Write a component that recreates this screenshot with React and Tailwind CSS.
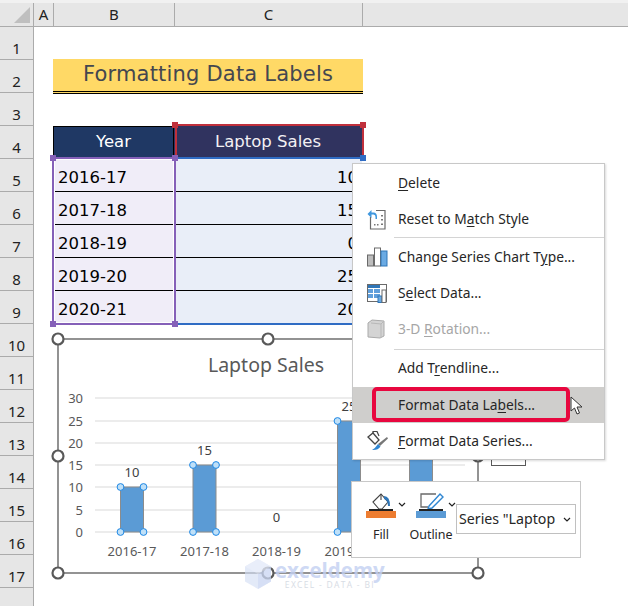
import React from 'react';

const headFont = "font-['DejaVu_Sans',sans-serif]";
const uiFont = "font-['Noto_Sans',sans-serif]";

const rows = [
  { id: 5, year: '2016-17', sales: 10 },
  { id: 6, year: '2017-18', sales: 15 },
  { id: 7, year: '2018-19', sales: 0 },
  { id: 8, year: '2019-20', sales: 25 },
  { id: 9, year: '2020-21', sales: 20 },
];

const RowHead = ({ n }) => (
  <div className="w-[34px] shrink-0 h-full flex items-center justify-center pt-[10px] bg-[#e6e6e6] border-r border-b border-[#ababab] text-[15px] text-[#222]">
    {n}
  </div>
);

const Row = ({ n, children }) => (
  <div className="flex h-[33px]">
    <RowHead n={n} />
    {children}
  </div>
);

const Handle = ({ className }) => <div className={`absolute w-[6px] h-[6px] ${className}`} />;

const Selection = () => (
  <>
    <div className="absolute left-[52px] top-[157px] w-[124px] h-[168px] border-2 border-[#8560b8] shadow-[inset_0_0_0_1px_#fff]" />
    <div className="absolute left-[175px] top-[124px] w-[189px] h-[35px] border-2 border-[#c0303c]" />
    <div className="absolute left-[176px] top-[157px] w-[187px] h-[2px] bg-[#2f6cc4]" />
    <div className="absolute left-[176px] top-[323px] w-[187px] h-[2px] bg-[#2f6cc4]" />
    <Handle className="left-[50px] top-[155px] bg-[#8560b8]" />
    <Handle className="left-[172px] top-[155px] bg-[#8560b8]" />
    <Handle className="left-[50px] top-[321px] bg-[#8560b8]" />
    <Handle className="left-[172px] top-[321px] bg-[#8560b8]" />
    <Handle className="left-[172px] top-[122px] bg-[#c0303c]" />
    <Handle className="left-[360px] top-[122px] bg-[#c0303c]" />
    <Handle className="left-[360px] top-[155px] bg-[#2f6cc4]" />
  </>
);

const BarPoints = ({ x, top }) => (
  <>
    {[[x, top], [x + 23, top], [x, 532], [x + 23, 532]].map(([cx, cy], i) => (
      <circle key={i} cx={cx} cy={cy} r="3.4" fill="#bfe0f8" stroke="#1e88e5" strokeWidth="1" />
    ))}
  </>
);

const Chart = () => {
  const ticks = [[30, 398], [25, 421], [20, 443], [15, 465], [10, 487], [5, 510], [0, 532]];
  const bars = [
    { x: 120.5, top: 487, label: '10', cx: 132, year: '2016-17' },
    { x: 193, top: 465, label: '15', cx: 204.5, year: '2017-18' },
    { x: 265, top: 532, label: '0', cx: 276.5, year: '2018-19' },
    { x: 337.5, top: 421, label: '25', cx: 349, year: '2019-20' },
    { x: 409.5, top: 443, label: '20', cx: 421, year: '2020-21' },
  ];
  const handles = [[58, 339], [268, 339], [478, 339], [58, 456], [478, 456], [58, 573], [268, 573], [478, 573]];
  return (
    <svg className="absolute left-[48px] top-[330px]" width="440" height="252" viewBox="48 330 440 252" fontFamily="Noto Sans, sans-serif">
      <rect x="58" y="339" width="420" height="234" fill="#fff" stroke="#595959" strokeWidth="1.3" />
      <text x="266" y="372" textAnchor="middle" fontSize="19.5" fill="#595959">Laptop Sales</text>
      {ticks.map(([v, y]) => (
        <g key={v}>
          <line x1="95" x2="465" y1={y} y2={y} stroke="#d9d9d9" strokeWidth="1" />
          <text x="83" y={y + 5} textAnchor="end" fontSize="13" fill="#595959">{v}</text>
        </g>
      ))}
      {bars.map((b) => (
        <g key={b.year}>
          {b.top < 532 && (
            <rect x={b.x} y={b.top} width="23" height={532 - b.top} fill="#5b9bd5" stroke="#8c8c8c" strokeWidth="1" />
          )}
          {b.top < 532 && <BarPoints x={b.x} top={b.top} />}
          <text x={b.cx} y={b.top - 10} textAnchor="middle" fontSize="13" fill="#404040">{b.label}</text>
          <text x={b.cx} y="556" textAnchor="middle" fontSize="13" fill="#595959">{b.year}</text>
        </g>
      ))}
      {handles.map(([cx, cy]) => (
        <circle key={`${cx}-${cy}`} cx={cx} cy={cy} r="5.5" fill="#fff" stroke="#595959" strokeWidth="2.2" />
      ))}
    </svg>
  );
};

const Watermark = () => (
  <div className="absolute left-[243px] top-[558px] flex items-center gap-[2px] opacity-80">
    <svg width="30" height="32" viewBox="0 0 30 32">
      <path d="M15 1 L28 8.5 V23.5 L15 31 L2 23.5 V8.5 Z" fill="#d5def5" fillOpacity="0.8" />
      <path d="M15 1 L28 8.5 L15 16 L2 8.5 Z" fill="#e6ebf9" fillOpacity="0.8" />
      <path d="M15 16 L28 8.5 V23.5 L15 31 Z" fill="#c8d4f1" fillOpacity="0.8" />
    </svg>
    <div className="flex flex-col items-center leading-none">
      <span className="text-[20.5px] font-bold text-[#c3d0f2] leading-[22px] font-['Open_Sans',sans-serif]">exceldemy</span>
      <span className="text-[8.5px] tracking-[1.3px] text-[#ced4de] font-['Open_Sans',sans-serif]">EXCEL - DATA - BI</span>
    </div>
  </div>
);

const ResetIcon = () => (
  <svg width="19" height="21" viewBox="0 0 19 21">
    <path d="M3.5 8 V20 H18 V1.5 H9" fill="#fff" stroke="#6a6a6a" strokeWidth="1.2" />
    <path d="M0.5 5 L4.5 1 V3.5 H6.5 Q10 3.7 10 8 V10 H8.5 V8 Q8.5 5.5 6.5 5.5 H4.5 V9 Z" fill="#3f97de" />
    <path d="M7 15h1.5v1.5H7zM10 15h1.5v1.5H10zM14 6h2v1.5h-2zM14 10h2v1.5h-2zM14 14.5h2V16h-2z" fill="#777" />
  </svg>
);

const ChartTypeIcon = () => (
  <svg width="21" height="20" viewBox="0 0 21 20">
    <rect x="0.5" y="8" width="6" height="11" fill="#bdbdbd" stroke="#6a6a6a" />
    <rect x="7.5" y="1" width="6" height="18" fill="#fff" stroke="#6a6a6a" />
    <rect x="14" y="4" width="6" height="15" fill="#6aaae3" stroke="#2f76b8" />
  </svg>
);

const SelectDataIcon = () => (
  <svg width="21" height="19" viewBox="0 0 21 19">
    <rect x="0.5" y="0.5" width="19" height="17" fill="#fff" stroke="#6a6a6a" />
    <path d="M1 1h12v3H1z" fill="#2f76b8" />
    <path d="M1 5h5v4H1zM7 5h6v4H7zM1 10h5v4H1zM7 10h6v4H7z" fill="#5f9fdc" />
    <rect x="11" y="12" width="4" height="6.5" fill="#6aaae3" stroke="#2f76b8" />
    <rect x="15" y="6" width="4" height="12.5" fill="#fff" stroke="#6a6a6a" />
  </svg>
);

const CubeIcon = () => (
  <svg width="18" height="20" viewBox="0 0 18 20">
    <path d="M1 4 L5 1 L17 2 V17 L13 19 L1 18 Z" fill="#d4d4d4" stroke="#aaa" />
    <path d="M4 4 L14 5 V18 M14 5 L17 2" fill="none" stroke="#b8b8b8" />
  </svg>
);

const SeriesIcon = () => (
  <svg width="21" height="20" viewBox="0 0 21 20">
    <path d="M1 6 L6 2 L12 9 L8 13 Z" fill="#fff" stroke="#444" strokeWidth="1.3" />
    <path d="M6 2 V0.5 H10 L12 5" fill="none" stroke="#444" strokeWidth="1.2" />
    <path d="M20 6 L21 7.5 L13 15 L11 13 Z" fill="#777" />
    <path d="M11 13 L13.5 15.5 Q11 19.5 5 19 Q8.5 17 11 13 Z" fill="#2f86d2" />
  </svg>
);

const MenuItem = ({ icon, disabled, active, children }) => (
  <div className={`relative flex items-center h-[36px] pl-[45px] text-[13.8px] ${disabled ? 'text-[#a6a6a6]' : 'text-[#262626]'} ${active ? 'bg-[#cfcecc] mt-px' : ''}`}>
    {icon && <span className="absolute left-[14px] top-0 bottom-0 flex items-center">{icon}</span>}
    <span>{children}</span>
    {active && <span className="absolute left-[19px] top-0 w-[198px] h-[35px] rounded-[5px] border-[4px] border-[#e8073f]" />}
  </div>
);

const ContextMenu = () => (
  <div className={`absolute left-[352px] top-[163px] w-[253px] border border-[#c8c8c8] bg-white pt-px shadow-[1px_1px_2px_rgba(0,0,0,0.15)] ${uiFont}`}>
    <MenuItem><u className="underline-offset-2">D</u>elete</MenuItem>
    <MenuItem icon={<ResetIcon />}>Reset to M<u className="underline-offset-2">a</u>tch Style</MenuItem>
    <div className="ml-[41px] h-px bg-[#d4d4d4] mb-px" />
    <MenuItem icon={<ChartTypeIcon />}>Change Series Chart T<u className="underline-offset-2">y</u>pe...</MenuItem>
    <MenuItem icon={<SelectDataIcon />}>S<u className="underline-offset-2">e</u>lect Data...</MenuItem>
    <MenuItem icon={<CubeIcon />} disabled>3-D <u className="underline-offset-2">R</u>otation...</MenuItem>
    <div className="ml-[41px] h-px bg-[#d4d4d4] mt-[2px]" />
    <MenuItem>Add T<u className="underline-offset-2">r</u>endline...</MenuItem>
    <MenuItem active>Format Data La<u className="underline-offset-2">b</u>els...</MenuItem>
    <MenuItem icon={<SeriesIcon />}><u className="underline-offset-2">F</u>ormat Data Series...</MenuItem>
  </div>
);

const Chevron = ({ className = '' }) => (
  <svg className={className} width="8" height="5" viewBox="0 0 8 5">
    <path d="M1 1 L4 4 L7 1" fill="none" stroke="#222" strokeWidth="1.2" />
  </svg>
);

const FillIcon = () => (
  <svg width="30" height="27" viewBox="0 0 30 27">
    <path d="M7 11 L15 3 L22 11 L16 18 H13 Z" fill="#fff" stroke="#444" strokeWidth="1.1" />
    <path d="M15 3 V9" stroke="#444" strokeWidth="1.1" />
    <path d="M18 5 Q24 5 24 15 H22 Q22 9 18 8 Z" fill="#2f76b8" />
    <rect x="3" y="18" width="24" height="2" fill="#222" />
    <rect x="0" y="20" width="30" height="7" fill="#ed7d31" />
  </svg>
);

const OutlineIcon = () => (
  <svg width="30" height="27" viewBox="0 0 30 27">
    <path d="M20 3 H5 V16 H12" fill="none" stroke="#6a6a6a" strokeWidth="1.3" />
    <path d="M13 15 L24 3 L27 6 L16 17 L12 18 Z" fill="#fff" stroke="#2f86d2" strokeWidth="1.4" />
    <rect x="3" y="18" width="24" height="2" fill="#222" />
    <rect x="0" y="20" width="30" height="7" fill="#5b9bd5" />
  </svg>
);

const MiniToolbar = () => (
  <div className={`absolute left-[351px] top-[481px] w-[230px] h-[77px] flex bg-white border border-[#c8c8c8] pl-[14px] text-[12.5px] text-[#262626] ${uiFont}`}>
    <div className="flex flex-col items-center w-[30px] pt-[9px]">
      <FillIcon />
      <span className="mt-[9px] leading-[16px]">Fill</span>
    </div>
    <Chevron className="mt-[20px] ml-[2px] shrink-0" />
    <div className="flex flex-col items-center w-[30px] ml-[10px] pt-[9px]">
      <OutlineIcon />
      <span className="mt-[9px] leading-[16px]">Outline</span>
    </div>
    <Chevron className="mt-[20px] ml-[2px] shrink-0" />
    <div className="mt-[22px] w-[120px] h-[30px] flex items-center justify-between border border-[#c0c0c0] pl-[2px] pr-[4px] text-[14.2px] whitespace-nowrap">
      <span>Series "Laptop</span>
      <Chevron />
    </div>
  </div>
);

export default function App() {
  return (
    <div className="relative w-[628px] h-[606px] overflow-hidden bg-white font-['Noto_Sans',sans-serif]">
      {/* column headers */}
      <div className="flex h-[27px] border-t-[3px] border-t-[#f1f1f1] bg-[#e6e6e6] border-b border-[#ababab] text-[15px] text-[#222]">
        <div className="w-[34px] flex items-end justify-end border-r border-[#ababab] pr-[3px] pb-[3px]">
          <svg width="16" height="16" viewBox="0 0 16 16"><path d="M16 0V16H0Z" fill="#bfbfbf" /></svg>
        </div>
        <div className="w-[20px] flex items-center justify-center border-r border-[#ababab]">A</div>
        <div className="w-[121px] flex items-center justify-center border-r border-[#ababab]">B</div>
        <div className="w-[188px] flex items-center justify-center border-r border-[#ababab]">C</div>
      </div>

      <Row n={1} />
      <Row n={2}>
        <div className="ml-[19px] w-[310px] h-[35px] flex items-center justify-center bg-[#ffd966] border-b-[3px] border-double border-black text-[21px] text-[#44474f] tracking-[0.2px] font-['DejaVu_Sans',sans-serif] -mt-px">
          Formatting Data Labels
        </div>
      </Row>
      <Row n={3} />
      <Row n={4}>
        <div className={`ml-[19px] w-[121px] flex items-center justify-center bg-[#1f3864] border border-black text-white text-[16.5px] ${headFont}`}>Year</div>
        <div className={`w-[188px] flex items-center justify-center bg-[#30335f] text-[#f3f0f3] text-[16.5px] ${headFont}`}>Laptop Sales</div>
      </Row>
      {rows.map((r) => (
        <Row key={r.id} n={r.id}>
          <div className={`ml-[19px] w-[121px] flex items-center pl-[5px] pt-[6px] bg-[#f0edf8] border-b border-black text-[16.5px] text-black ${headFont}`}>{r.year}</div>
          <div className={`w-[188px] flex items-center justify-end pr-[4px] pt-[6px] bg-[#e9eef8] border-b border-black text-[16.5px] text-black ${headFont}`}>{r.sales}</div>
        </Row>
      ))}
      {[10, 11, 12, 13, 14, 15, 16, 17].map((n) => <Row key={n} n={n} />)}
      <div className="w-[34px] h-[20px] bg-[#e6e6e6] border-r border-[#ababab]" />

      <Selection />
      <Chart />
      <Watermark />
      <div className="absolute left-[491px] top-[440px] w-[35px] h-[26px] bg-white border border-[#595959]" />
      <ContextMenu />
      <MiniToolbar />
      {/* mouse pointer */}
      <svg className="absolute left-[570px] top-[396px]" width="13" height="20" viewBox="0 0 13 20">
        <path d="M1 1 V15 L4.5 12 L7 18 L9.5 17 L7 11 H12 Z" fill="#fff" stroke="#333" strokeWidth="1" />
      </svg>
    </div>
  );
}
